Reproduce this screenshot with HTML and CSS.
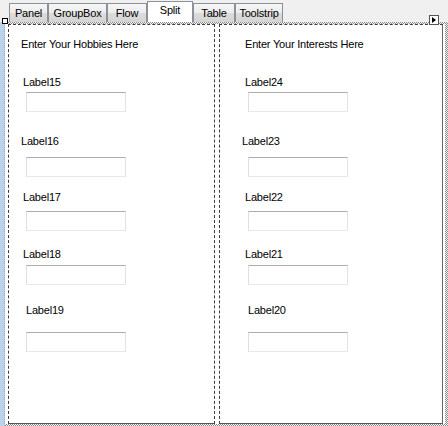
FILE: index.html
```html
<!DOCTYPE html>
<html>
<head>
<meta charset="utf-8">
<link rel="stylesheet" href="styles.css">
</head>
<body>
<div class="window">
  <div class="tabs">
    <div class="tab tab--panel">Panel</div>
    <div class="tab tab--groupbox">GroupBox</div>
    <div class="tab tab--flow">Flow</div>
    <div class="tab tab--split tab--active">Split</div>
    <div class="tab tab--table">Table</div>
    <div class="tab tab--toolstrip">Toolstrip</div>
  </div>
  <div class="main">
    <div class="strip"></div>
    <div class="page">
      <div class="page-inner">
        <div class="pane pane--left">
          <div class="heading">Enter Your Hobbies Here</div>
          <div class="label l1">Label15</div>
          <div class="box b1"></div>
          <div class="label l2 shift-l">Label16</div>
          <div class="box b2"></div>
          <div class="label l3">Label17</div>
          <div class="box b3"></div>
          <div class="label l4">Label18</div>
          <div class="box b4"></div>
          <div class="label l5 shift-r">Label19</div>
          <div class="box b5"></div>
        </div>
        <div class="pane pane--right">
          <div class="heading">Enter Your Interests Here</div>
          <div class="label l1">Label24</div>
          <div class="box b1"></div>
          <div class="label l2 shift-l">Label23</div>
          <div class="box b2"></div>
          <div class="label l3">Label22</div>
          <div class="box b3"></div>
          <div class="label l4">Label21</div>
          <div class="box b4"></div>
          <div class="label l5 shift-r">Label20</div>
          <div class="box b5"></div>
        </div>
      </div>
    </div>
  </div>
  <div class="handle"></div>
  <div class="smart-tag">
    <svg width="10" height="10" viewBox="0 0 10 10"><rect x="0.5" y="0.5" width="9" height="9" fill="#fff" stroke="#555"/><polygon points="3,2 7,5 3,8" fill="#000"/></svg>
  </div>
</div>
</body>
</html>
```

FILE: styles.css
```css
html, body {
  margin: 0;
  padding: 0;
}
body {
  background: #f0f0f0;
  font-family: "Liberation Sans", Arial, sans-serif;
  font-size: 11px;
  letter-spacing: -0.2px;
  color: #000;
}
.window {
  position: relative;
  width: 448px;
  height: 426px;
  overflow: hidden;
  display: flex;
  flex-direction: column;
}
.tabs {
  height: 22px;
  display: flex;
  align-items: flex-end;
  padding-left: 9px;
  box-sizing: border-box;
}
.tab {
  box-sizing: border-box;
  height: 19px;
  border: 1px solid #8d9096;
  border-bottom: none;
  background: linear-gradient(#f6f6f6, #ebebeb 50%, #dcdcdc 51%, #d4d4d4);
  text-align: center;
  line-height: 13px;
  padding-top: 3px;
  white-space: nowrap;
}
.tab--active {
  height: 21px;
  background: #fff;
  padding-top: 2px;
  border-color: #8d9096;
}
.tab--panel { width: 39px; }
.tab--groupbox { width: 59px; }
.tab--flow { width: 40px; }
.tab--split { width: 46px; }
.tab--table { width: 42px; }
.tab--toolstrip { width: 48px; }

.main {
  flex: 1;
  display: flex;
}
.strip {
  width: 4px;
  background: #bcd3ec;
  border-right: 1px dotted #8aa8cc;
}
.page {
  flex: 1;
  display: flex;
  padding: 2px 3px 2px 0;
  background: repeating-conic-gradient(#8a8a8a 0 25%, #f4f4f4 0 50%) 0 0 / 2px 2px;
}
.page-inner {
  flex: 1;
  display: flex;
  background: #fff;
  padding: 0 2px 0 3px;
  gap: 4px;
}
.pane {
  box-sizing: border-box;
  height: 400px;
  border-top: 1px dashed #3c3c3c;
  border-left: 1px dashed #3c3c3c;
  border-bottom: 1px solid #555;
  line-height: 13px;
}
.pane--left {
  width: 207px;
  border-right: 1px dashed #3c3c3c;
  padding-left: 12px;
}
.pane--right {
  width: 224px;
  border-right: 1px solid #666;
  padding-left: 25px;
}
.heading {
  margin-top: 13px;
}
.label {
  margin-left: 2px;
}
.pane--right .label { margin-left: 0; }
.label.shift-l { margin-left: 0; }
.pane--right .label.shift-l { margin-left: -3px; }
.label.shift-r { margin-left: 5px; }
.pane--right .label.shift-r { margin-left: 3px; }

.box {
  box-sizing: border-box;
  width: 100px;
  height: 20px;
  margin-left: 5px;
  background: #fff;
  border: 1px solid;
  border-color: #abadb3 #e2e3ea #e3e9ef #dbdfe6;
}
.pane--right .box { margin-left: 3px; }

.l1 { margin-top: 25px; }
.b1 { margin-top: 3px; }
.l2 { margin-top: 23px; }
.b2 { margin-top: 9px; }
.l3 { margin-top: 14px; }
.b3 { margin-top: 7px; }
.l4 { margin-top: 17px; }
.b4 { margin-top: 4px; }
.l5 { margin-top: 19px; }
.b5 { margin-top: 15px; }

.handle {
  position: absolute;
  left: 2px;
  top: 18px;
  width: 4px;
  height: 4px;
  background: #fff;
  border: 1px solid #000;
}
.smart-tag {
  position: absolute;
  left: 429px;
  top: 15px;
  width: 10px;
  height: 10px;
  line-height: 0;
}
```
